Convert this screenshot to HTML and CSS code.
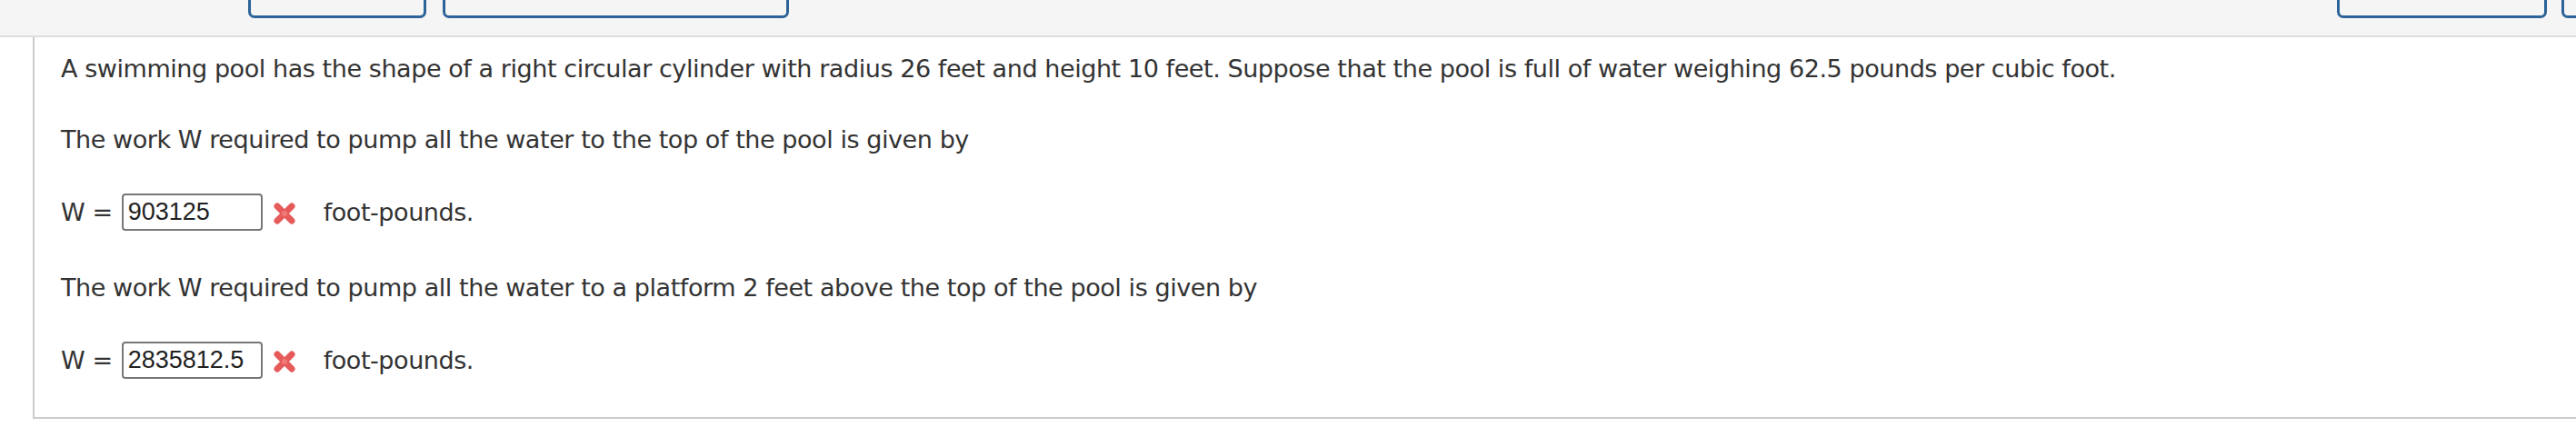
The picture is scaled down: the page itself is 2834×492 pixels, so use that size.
FILE: index.html
```html
<!DOCTYPE html>
<html>
<head>
    <meta charset="UTF-8">
    <title>Swimming pool work</title>

    <link rel="stylesheet" href="styles.css">
</head>
<body>
    <div class="toolbar">
        <span class="tab tab-short"></span>
        <span class="tab tab-long"></span>
        <span class="tab tab-mid tab-far"></span>
        <span class="tab tab-mid"></span>
    </div>

    <div class="question">
        <p>A swimming pool has the shape of a right circular cylinder with radius 26 feet and height 10 feet. Suppose that the pool is full of water weighing 62.5 pounds per cubic foot.</p>

        <p>The work W required to pump all the water to the top of the pool is given by</p>

        <div class="answer">
            <span class="label">W =</span>
            <input class="field" type="text" value="903125">
            <svg class="wrong" width="26" height="26" viewBox="0 0 26 26">
                <path d="M 5,5 L 21,21 M 21,5 L 5,21"></path>
                <circle cx="13" cy="13" r="3"></circle>
            </svg>
            <span class="unit">foot-pounds.</span>
        </div>

        <p>The work W required to pump all the water to a platform 2 feet above the top of the pool is given by</p>

        <div class="answer">
            <span class="label">W =</span>
            <input class="field" type="text" value="2835812.5">
            <svg class="wrong" width="26" height="26" viewBox="0 0 26 26">
                <path d="M 5,5 L 21,21 M 21,5 L 5,21"></path>
                <circle cx="13" cy="13" r="3"></circle>
            </svg>
            <span class="unit">foot-pounds.</span>
        </div>
    </div>
</body>
</html>
```

FILE: styles.css
```css
body {
    margin: 0;
    background: #fff;

    color: #333;
    font-family: "DejaVu Sans", Verdana, sans-serif;
    font-size: 27px;
    letter-spacing: -0.43px;
}

.toolbar {
    display: flex;
    height: 39px;
    padding-left: 273px;
    overflow: hidden;

    background-color: #f5f5f5;
    border-bottom: 2px solid #ddd;
}

.tab {
    flex-shrink: 0;
    height: 17px;
    margin-right: 18px;

    border: 3px solid #2d6399;
    border-top: none;
    border-radius: 0 0 7px 7px;
}

.tab-short {
    width: 190px;
}

.tab-long {
    width: 375px;
}

.tab-mid {
    width: 225px;
    margin-right: 16px;
}

.tab-far {
    margin-left: 1685px;
}

.question {
    display: flex;
    flex-direction: column;
    gap: 44px;
    height: 400px;
    margin-left: 36px;
    padding: 18px 0 0 29px;

    border-left: 2px solid #ccc;
    border-bottom: 2px solid #ccc;
}

.question p {
    margin: 0;
    line-height: 34px;
}

.question .answer + p {
    margin-top: 2px;
}

.answer {
    display: flex;
    align-items: center;
    height: 41px;
    margin-top: -2px;
    line-height: 34px;
}

.label {
    margin-right: 10px;
}

.field {
    box-sizing: border-box;
    width: 155px;
    height: 41px;
    margin: 0;
    padding: 0 0 0 5px;

    color: #222;
    font-family: "Liberation Sans", Arial, sans-serif;
    font-size: 27px;
    letter-spacing: 0;

    background: #fff;
    border: 2px solid #777;
    border-radius: 4px;
}

.wrong {
    margin: 2px 30px 0 11px;
}

.wrong path {
    fill: none;
    stroke: #e65a5a;
    stroke-width: 7;
    stroke-linecap: round;
}

.wrong circle {
    fill: #f07a7a;
}
```
